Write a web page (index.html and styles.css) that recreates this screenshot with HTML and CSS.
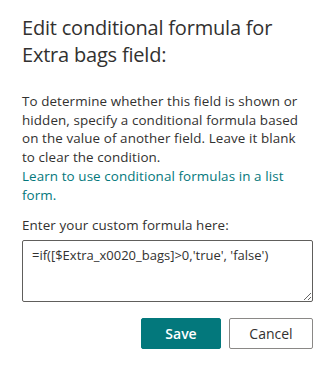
FILE: index.html
```html
<!DOCTYPE html>
<html lang="en">
<head>
<meta charset="utf-8">
<title>Edit conditional formula</title>
<link rel="stylesheet" href="styles.css">
</head>
<body>
<div class="dialog">
  <h1 class="title">Edit conditional formula for Extra bags field:</h1>
  <p class="desc">To determine whether this field is shown or hidden, specify a conditional formula based on the value of another field. Leave it blank to clear the condition.<br><a class="link" href="#">Learn to use conditional formulas in a list form.</a></p>
  <label class="label" for="formula">Enter your custom formula here:</label>
  <textarea id="formula" class="formula">=if([$Extra_x0020_bags]&gt;0,'true', 'false')</textarea>
  <div class="actions">
    <button class="btn btn-primary" type="button">Save</button>
    <button class="btn btn-default" type="button">Cancel</button>
  </div>
</div>
</body>
</html>
```
FILE: styles.css
```css
html, body {
  margin: 0;
  padding: 0;
  background: #ffffff;
}
body {
  font-family: "Open Sans", "Noto Sans", "Liberation Sans", sans-serif;
  color: #323130;
}
.dialog {
  width: 291px;
  padding: 14px 19px 0 22px;
  display: flex;
  flex-direction: column;
}
.title {
  margin: 0;
  font-size: 20px;
  line-height: 27px;
  font-weight: 400;
  color: #323130;
  letter-spacing: -0.2px;
}
.desc {
  margin: 24px 8px 0 0;
  font-size: 13.4px;
  line-height: 18.7px;
  letter-spacing: 0.1px;
  color: #323130;
}
.link {
  color: #03787c;
  text-decoration: none;
}
.label {
  margin-top: 12px;
  font-size: 13.4px;
  line-height: 18.7px;
  letter-spacing: 0.1px;
  color: #323130;
}
.formula {
  margin-top: 5px;
  box-sizing: border-box;
  width: 291px;
  height: 62px;
  border: 1px solid #605e5c;
  border-radius: 2px;
  padding: 5px 9px;
  font-family: "Open Sans", "Noto Sans", "Liberation Sans", sans-serif;
  font-size: 13px;
  line-height: 19px;
  color: #323130;
  resize: both;
  outline: none;
}
.actions {
  margin-top: 16px;
  display: flex;
  justify-content: flex-end;
  gap: 8px;
}
.btn {
  box-sizing: border-box;
  height: 31px;
  border-radius: 2px;
  font-family: "Open Sans", "Noto Sans", "Liberation Sans", sans-serif;
  font-size: 14px;
  padding: 0;
  cursor: pointer;
}
.btn-primary {
  width: 80px;
  background: #03787c;
  border: 1px solid #03787c;
  color: #ffffff;
  font-weight: 600;
}
.btn-default {
  width: 84px;
  background: #ffffff;
  border: 1px solid #8a8886;
  color: #323130;
  font-weight: 400;
}
```
